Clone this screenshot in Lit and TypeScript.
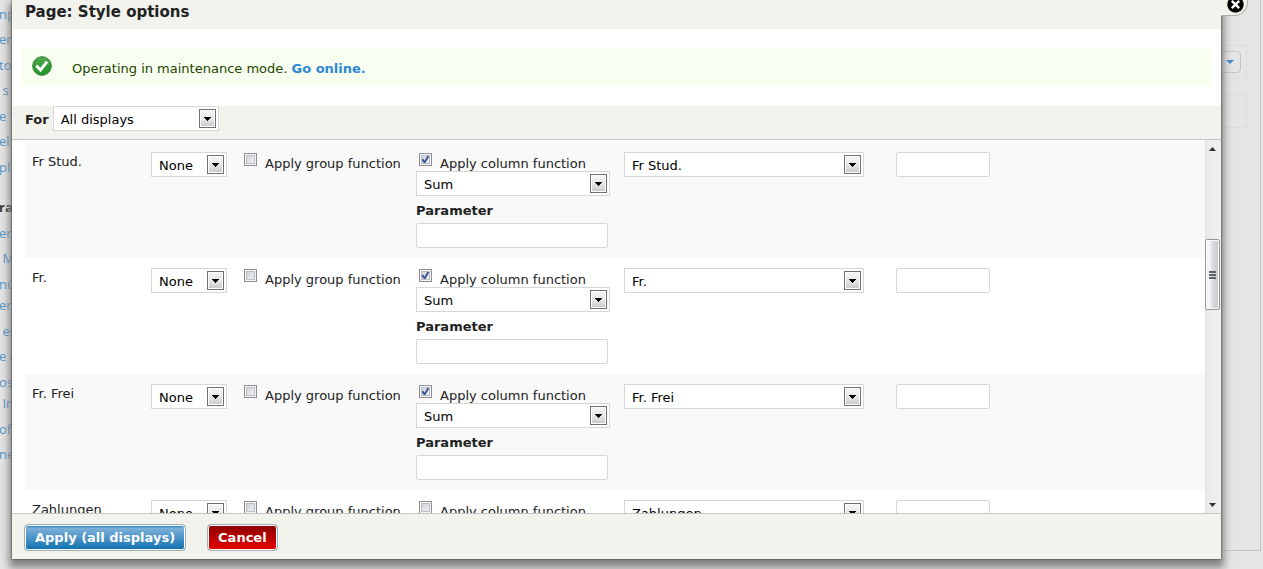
import { LitElement, html, css, svg } from "lit";
import { customElement, property } from "lit/decorators.js";
import { classMap } from "lit/directives/class-map.js";

interface NavEntry {
  text: string;
  kind?: "heading" | "tight";
}

interface FieldRow {
  id: string;
  label: string;
  column: boolean;
}

const NAV: NavEntry[] = [
  { text: "np" },
  { text: "er" },
  { text: "tor" },
  { text: " s" },
  { text: "e T" },
  { text: "el" },
  { text: "pl" },
  { text: "rat", kind: "heading" },
  { text: "er" },
  { text: " M" },
  { text: "nü" },
  { text: "er", kind: "tight" },
  { text: " es" },
  { text: "e c" },
  { text: "os" },
  { text: " In", kind: "tight" },
  { text: "ofo" },
  { text: "ne" },
];

const ROWS: FieldRow[] = [
  { id: "stud", label: "Fr Stud.", column: true },
  { id: "fr", label: "Fr.", column: true },
  { id: "frei", label: "Fr. Frei", column: true },
  { id: "zahlungen", label: "Zahlungen", column: false },
];

const controls = css`
  * {
    box-sizing: border-box;
  }
  select,
  input,
  button {
    font: inherit;
    margin: 0;
  }
  select {
    appearance: none;
    display: block;
    height: 25px;
    padding: 2px 24px 0 7px;
    border: 1px solid #d6d6d6;
    border-radius: 0;
    color: #000;
    background: #fff
      url("data:image/svg+xml,%3Csvg xmlns='http://www.w3.org/2000/svg' width='18' height='19'%3E%3Cdefs%3E%3ClinearGradient id='g' x2='0' y2='1'%3E%3Cstop stop-color='%23f4f4f4'/%3E%3Cstop offset='.5' stop-color='%23e8e8e8'/%3E%3Cstop offset='1' stop-color='%23cccccc'/%3E%3C/linearGradient%3E%3C/defs%3E%3Crect x='.5' y='.5' width='16' height='18' fill='%23fff' stroke='%23707070'/%3E%3Crect x='2' y='2' width='13' height='15' fill='url(%23g)'/%3E%3Cpath d='M5 8h7v1h-1v1h-1v1H9v1H8v-1H7v-1H6V9H5z' fill='%23000'/%3E%3C/svg%3E")
      no-repeat right 1px center;
  }
  input[type="text"] {
    display: block;
    height: 25px;
    border: 1px solid #d6d6d6;
    border-radius: 2px;
    padding: 0 4px;
    background: #fff;
  }
  input[type="checkbox"] {
    appearance: none;
    flex: none;
    width: 13px;
    height: 13px;
    border: 1px solid #8e8f8f;
    box-shadow: inset 0 0 0 1px #f4f4f4, inset 0 0 0 2px #b8bfc6;
    background: linear-gradient(135deg, #cbcfd5, #f6f6f6);
  }
  input[type="checkbox"]:checked {
    background: url("data:image/svg+xml,%3Csvg xmlns='http://www.w3.org/2000/svg' width='11' height='11'%3E%3Cpath d='M2.2 5.2l2.4 3.2L8.8 1.2' fill='none' stroke='%233f559c' stroke-width='2'/%3E%3C/svg%3E")
        center no-repeat,
      linear-gradient(135deg, #cbcfd5, #f6f6f6);
  }
`;

@customElement("page-backdrop")
export class PageBackdrop extends LitElement {
  static styles = css`
    :host {
      display: flex;
      justify-content: space-between;
      height: 100%;
      font: 13px/20px "Open Sans", "Noto Sans", sans-serif;
    }
    .nav {
      width: 24px;
      padding-top: 4px;
      overflow: hidden;
      text-indent: -1px;
    }
    .link,
    .heading {
      display: block;
      margin: 0 0 5px;
      white-space: pre;
      color: #4f94cc;
      text-decoration: none;
      font-size: 13px;
      line-height: 20px;
    }
    .link:nth-child(even) {
      margin-bottom: 6px;
    }
    .heading {
      margin-top: 20px;
      margin-bottom: 6px;
      color: #333;
    }
    .tight {
      margin-top: -4px;
    }
    .panel {
      display: flex;
      flex-direction: column;
      gap: 15px;
      box-sizing: border-box;
      width: 60px;
      margin: 0 2px 18px 0;
      padding: 45px 13px 0 0;
      border: solid #c4c4c4;
      border-width: 0 1px 1px 0;
    }
    .bar {
      box-sizing: border-box;
      height: 34px;
      padding: 5px 5px;
      border: 1px solid #dcdcdc;
      display: flex;
      justify-content: flex-end;
    }
    .drop {
      box-sizing: border-box;
      width: 32px;
      height: 22px;
      padding: 0 6px 0 0;
      border: 1px solid #c4c4c4;
      border-radius: 4px;
      background: #e6e6e6;
      display: flex;
      align-items: center;
      justify-content: flex-end;
    }
  `;

  render() {
    return html`
      <nav class="nav">
        ${NAV.map((n) =>
          n.kind === "heading"
            ? html`<h3 class="heading">${n.text}</h3>`
            : html`<a class=${classMap({ link: true, tight: n.kind === "tight" })} href="#">${n.text}</a>`
        )}
      </nav>
      <div class="panel">
        <div class="bar">
          <button class="drop" aria-label="More actions">
            <svg width="8" height="4" viewBox="0 0 8 4"><path d="M0 0h8L4 4z" fill="#3d8bce" /></svg>
          </button>
        </div>
        <div class="bar"></div>
      </div>
    `;
  }
}

@customElement("field-table")
export class FieldTable extends LitElement {
  @property({ attribute: false }) rows: FieldRow[] = [];

  static styles = [
    controls,
    css`
      :host {
        display: block;
      }
      .table {
        width: 100%;
        table-layout: fixed;
        border-collapse: collapse;
      }
      .name-col { width: 119px; }
      .align-col { width: 90px; }
      .group-col { width: 175px; }
      .function-col { width: 208px; }
      .merge-col { width: 272px; }
      .row:nth-child(odd) {
        background: #f9f9f9;
      }
      .cell {
        height: 116px;
        padding: 10px 7px;
        text-align: left;
        vertical-align: top;
        font-weight: normal;
        line-height: 20px;
      }
      .align { width: 76px; }
      .check {
        display: flex;
        gap: 8px;
        height: 19px;
        padding: 1px 3px 0;
        line-height: 22px;
        white-space: nowrap;
      }
      .sum { width: 194px; }
      .merge { width: 240px; }
      .parameter {
        display: block;
        margin: 5px 0 2px;
        font-weight: bold;
      }
      .cell .value { width: 192px; }
      .cell .separator { width: 94px; }
    `,
  ];

  private row(r: FieldRow) {
    return html`
      <tr class="row">
        <th class="cell" scope="row">${r.label}</th>
        <td class="cell">
          <select class="align" aria-label="Align"><option>None</option></select>
        </td>
        <td class="cell">
          <label class="check" for="g-${r.id}"><input type="checkbox" id="g-${r.id}" />Apply group function</label>
        </td>
        <td class="cell">
          <label class="check" for="c-${r.id}"
            ><input type="checkbox" id="c-${r.id}" .checked=${r.column} />Apply column function</label
          >
          ${r.column
            ? html`<select class="sum" aria-label="Column function"><option>Sum</option></select>
                <label class="parameter" for="p-${r.id}">Parameter</label>
                <input class="value" type="text" id="p-${r.id}" />`
            : null}
        </td>
        <td class="cell">
          <select class="merge" aria-label="Column"><option>${r.label}</option></select>
        </td>
        <td class="cell"><input class="separator" type="text" aria-label="Separator" /></td>
      </tr>
    `;
  }

  render() {
    return html`
      <table class="table">
        <colgroup>
          <col class="name-col" />
          <col class="align-col" />
          <col class="group-col" />
          <col class="function-col" />
          <col class="merge-col" />
          <col />
        </colgroup>
        <tbody>
          ${this.rows.map((r) => this.row(r))}
        </tbody>
      </table>
    `;
  }
}

@customElement("scroll-rail")
export class ScrollRail extends LitElement {
  static styles = css`
    :host {
      display: flex;
      flex-direction: column;
      align-items: center;
      flex: none;
      box-sizing: border-box;
      width: 16px;
      padding: 7px 0 6px;
      box-shadow: inset 1px 0 #e2e2e2;
      background: linear-gradient(90deg, #e9e9e9, #f2f2f2);
    }
    .before { flex: 87; }
    .after { flex: 190; }
    .thumb {
      box-sizing: border-box;
      width: 15px;
      height: 71px;
      margin-right: 1px;
      border: 1px solid #979797;
      border-radius: 2px;
      box-shadow: inset 0 0 0 1px #fafafa;
      background: linear-gradient(90deg, #f4f4f4 30%, #dcdce0 50%, #c6c6cb);
      display: flex;
      align-items: center;
      justify-content: center;
    }
    svg { display: block; }
  `;

  render() {
    const grip = [0, 3, 6].map((y) => svg`<rect y=${y} width="7" height="2" fill="#606468" />`);
    return html`
      <svg width="8" height="4" viewBox="0 0 8 4"><path d="M0 4L3.5 0 7 4z" fill="#333" /></svg>
      <div class="before"></div>
      <div class="thumb"><svg width="7" height="8">${grip}</svg></div>
      <div class="after"></div>
      <svg width="8" height="4" viewBox="0 0 8 4"><path d="M0 0h7L3.5 4z" fill="#333" /></svg>
    `;
  }
}

@customElement("app-root")
export class AppRoot extends LitElement {
  static styles = [
    controls,
    css`
      :host {
        display: block;
        position: relative;
        height: 100vh;
        overflow: hidden;
        background: #e5e5e5;
        color: #222;
        font: 13px/20px Verdana, "DejaVu Sans", sans-serif;
      }
      .dialog {
        position: absolute;
        inset: 0 42px 10px 12px;
        display: flex;
        flex-direction: column;
        background: #fff;
        box-shadow: 0 0 2px #222, 0 6px 8px 3px #858585;
      }
      .close {
        position: absolute;
        top: -12px;
        left: 100%;
        width: 27px;
        height: 28px;
        padding: 8px 4px 3px 6px;
        border: 1px solid #b0b0a8;
        border-width: 0 1px 1px 0;
        border-radius: 0 0 14px 0;
        background: #f3f3ed;
      }
      .close svg { display: block; }
      .header {
        flex: none;
        height: 29px;
        padding: 2px 13px;
        background: #f3f3ed;
      }
      .title {
        margin: 0;
        font-size: 15px;
        line-height: 20px;
      }
      .message {
        display: flex;
        gap: 19px;
        margin: 20px 10px;
        padding: 7px 9px;
        border-radius: 3px;
        background: #f8fff0;
        color: #234600;
      }
      .status { flex: none; }
      .text {
        margin: 0;
        padding-top: 3px;
        line-height: 20px;
      }
      .online {
        font-weight: bold;
        color: #2e86d6;
        text-decoration: none;
      }
      .toolbar {
        flex: none;
        display: flex;
        align-items: flex-start;
        gap: 4px;
        height: 34px;
        padding: 0 13px;
        border-bottom: 1px solid #c4c4c4;
        background: #f3f3ed;
      }
      .for {
        font-weight: bold;
        line-height: 27px;
      }
      .displays { width: 166px; }
      .body {
        flex: 1;
        min-height: 0;
        display: flex;
      }
      .content {
        flex: 1;
        overflow: hidden;
        padding: 2px 0 0 13px;
      }
      .footer {
        flex: none;
        display: flex;
        gap: 21px;
        height: 46px;
        padding: 10px 12px;
        border-top: 1px solid #c4c4c4;
        background: #f3f3ed;
      }
      .button {
        height: 27px;
        padding: 1px 10px 0;
        border: 1px solid #9fb0b8;
        border-radius: 4px;
        box-shadow: inset 0 0 0 1px #fff;
        color: #fff;
        font-weight: bold;
        white-space: nowrap;
      }
      .apply { background: linear-gradient(#3f8fc9 2px, #7db1d9 3px, #0d6fb0); }
      .cancel { background: linear-gradient(#8a0000, #e80000); }
    `,
  ];

  render() {
    return html`
      <page-backdrop></page-backdrop>
      <section class="dialog" role="dialog" aria-labelledby="title">
        <header class="header"><h1 class="title" id="title">Page: Style options</h1></header>
        <button class="close" aria-label="Close">
          <svg width="17" height="17" viewBox="0 0 17 17">
            <circle cx="8.5" cy="8.5" r="8.2" fill="#000" />
            <path d="M4.8 4.8l7.4 7.4M12.2 4.8l-7.4 7.4" stroke="#fff" stroke-width="2.4" />
          </svg>
        </button>
        <div class="message" role="status">
          <svg class="status" width="22" height="22" viewBox="0 0 22 22">
            <defs>
              <linearGradient id="green" x2="0" y2="1">
                <stop stop-color="#58ac50" />
                <stop offset=".5" stop-color="#36993a" />
                <stop offset="1" stop-color="#1f9a28" />
              </linearGradient>
            </defs>
            <circle cx="11" cy="10" r="9.3" fill="url(#green)" stroke="#2b7d35" />
            <path d="M5.3 9.6l4.2 4.4 6.6-8.4" fill="none" stroke="#fff" stroke-width="3" />
          </svg>
          <p class="text">Operating in maintenance mode. <a class="online" href="#">Go online.</a></p>
        </div>
        <div class="toolbar">
          <label class="for" for="displays">For</label>
          <select class="displays" id="displays"><option>All displays</option></select>
        </div>
        <div class="body">
          <div class="content"><field-table .rows=${ROWS}></field-table></div>
          <scroll-rail></scroll-rail>
        </div>
        <footer class="footer">
          <button class="button apply">Apply (all displays)</button>
          <button class="button cancel">Cancel</button>
        </footer>
      </section>
    `;
  }
}
